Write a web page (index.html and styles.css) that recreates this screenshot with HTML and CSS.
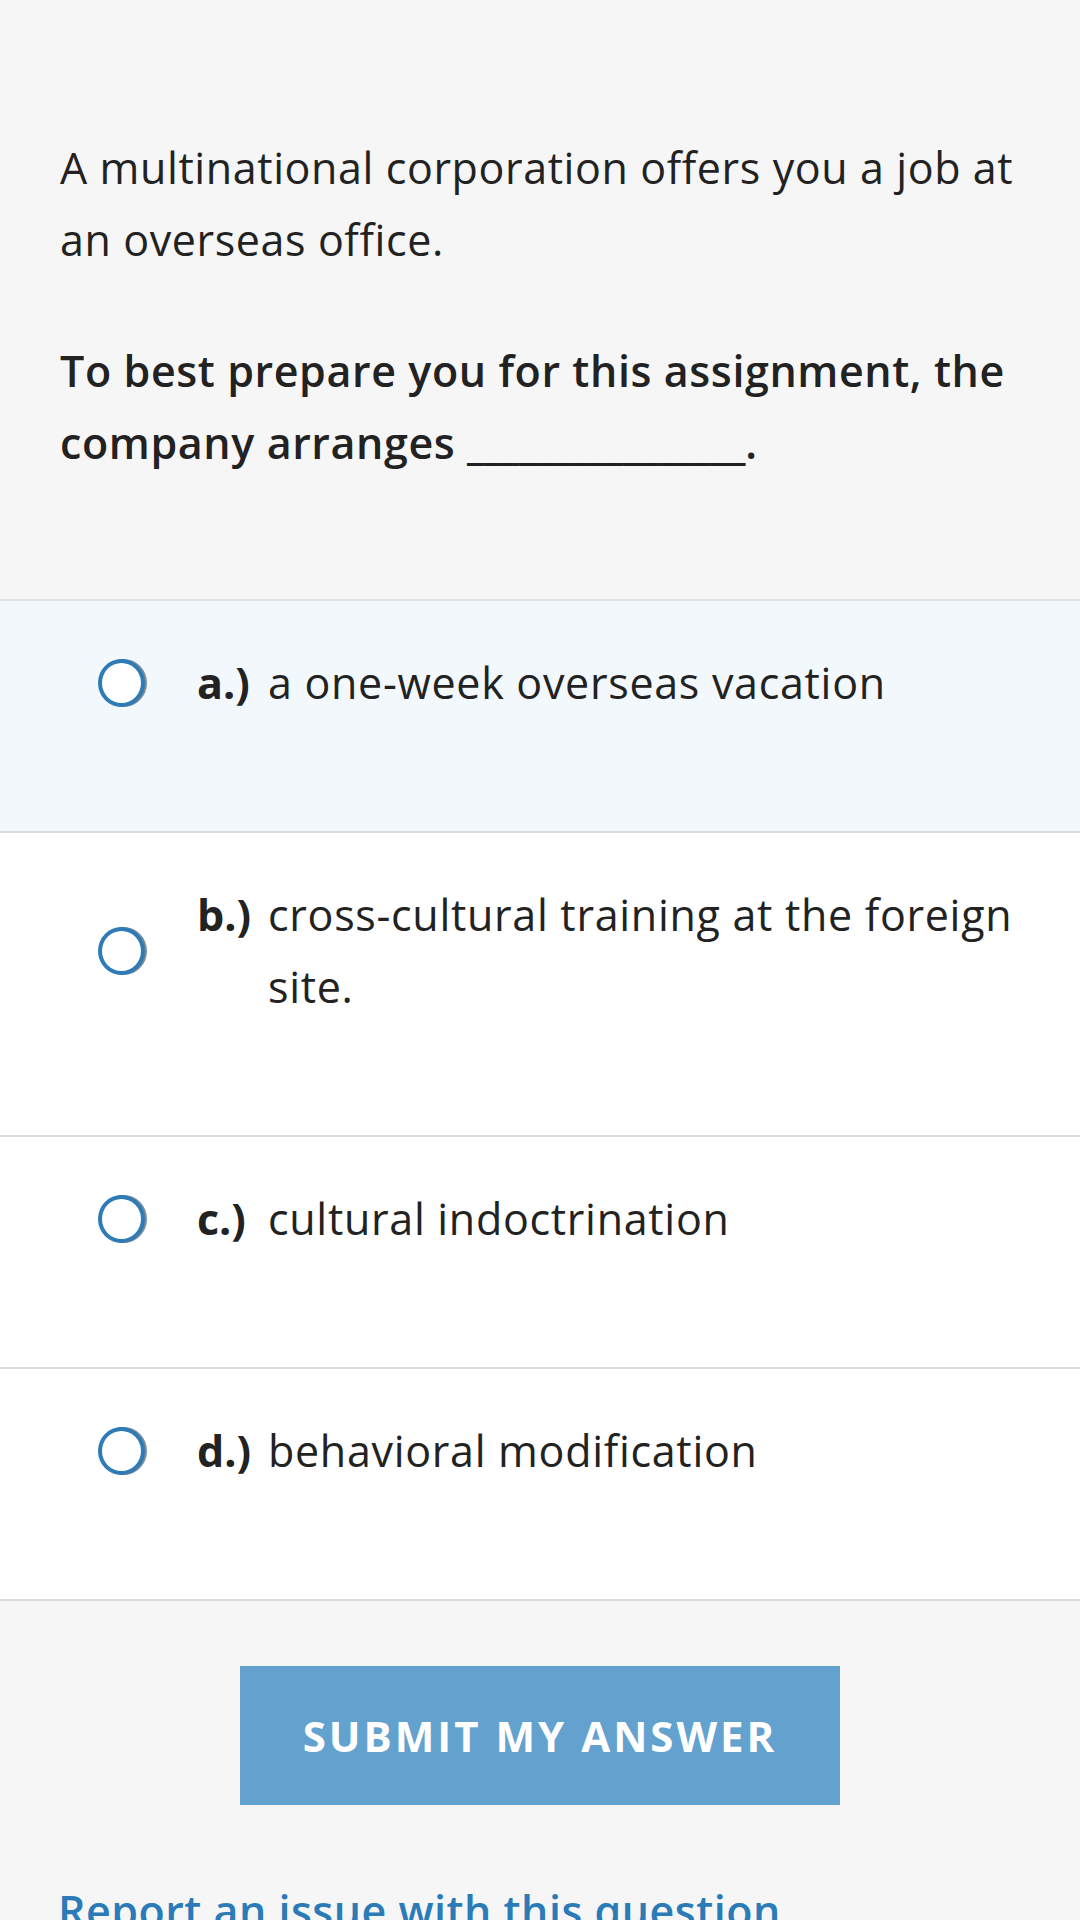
FILE: index.html
```html
<!DOCTYPE html>
<html lang="en">
<head>
<meta charset="utf-8">
<title>Question</title>
<link rel="stylesheet" href="styles.css">
</head>
<body>
<main class="page">
  <section class="question">
    <p class="stem">A multinational corporation offers you a job at an overseas office.</p>
    <p class="prompt">To best prepare you for this assignment, the company arranges <span class="blank">________________</span>.</p>
  </section>

  <ul class="options">
    <li class="option option-active">
      <span class="radio"></span>
      <span class="label">a.)</span>
      <span class="answer">a one-week overseas vacation</span>
    </li>
    <li class="option">
      <span class="radio"></span>
      <span class="label">b.)</span>
      <span class="answer">cross-cultural training at the foreign site.</span>
    </li>
    <li class="option">
      <span class="radio"></span>
      <span class="label">c.)</span>
      <span class="answer">cultural indoctrination</span>
    </li>
    <li class="option">
      <span class="radio"></span>
      <span class="label">d.)</span>
      <span class="answer">behavioral modification</span>
    </li>
  </ul>

  <div class="actions">
    <button class="submit" type="button">Submit my answer</button>
  </div>

  <a class="report" href="#">Report an issue with this question</a>
</main>
</body>
</html>
```

FILE: styles.css
```css
html, body {
  margin: 0;
  padding: 0;
}

body {
  background: #f6f6f6;
  font-family: "Open Sans", Lato, "Liberation Sans", sans-serif;
  color: #222222;
  width: 1080px;
  height: 1920px;
  overflow: hidden;
}

.page {
  display: flex;
  flex-direction: column;
}

.question {
  padding: 132px 50px 120px 60px;
  font-size: 43px;
  line-height: 72px;
  letter-spacing: 0.6px;
}

.question p {
  margin: 0;
}

.stem {
  font-weight: 400;
  margin-bottom: 59px !important;
}

.prompt {
  font-weight: 600;
}

.blank {
  letter-spacing: -0.3px;
  font-weight: 700;
}

.options {
  list-style: none;
  margin: 0;
  padding: 0;
  border-top: 2px solid #dde2e6;
}

.option {
  display: flex;
  align-items: flex-start;
  background: #ffffff;
  border-bottom: 2px solid #dcdcdc;
  padding: 46px 50px 112px 98px;
  font-size: 43px;
  line-height: 72px;
  letter-spacing: 0.7px;
}

.option-active {
  background: #f3f8fd;
  border-bottom-color: #d6dde3;
}

.radio {
  flex: none;
  align-self: center;
  width: 39px;
  height: 40px;
  border: 4px solid #2e7bb5;
  border-radius: 50%;
  background: #ffffff;
  box-shadow: 2px 0 0 0 #7d8c98;
  margin-right: 52px;
}

.label {
  flex: none;
  width: 71px;
  font-weight: 700;
  letter-spacing: 0;
}

.answer {
  flex: 1;
  font-weight: 400;
}

.actions {
  display: flex;
  justify-content: center;
  padding-top: 65px;
}

.submit {
  width: 600px;
  height: 139px;
  border: none;
  border-radius: 0;
  background: #63a1ce;
  color: #ffffff;
  font-family: "Open Sans", Lato, "Liberation Sans", sans-serif;
  font-weight: 700;
  font-size: 42px;
  letter-spacing: 3px;
  text-transform: uppercase;
}

.report {
  display: block;
  margin: 70px 0 0 58px;
  color: #2a7bb8;
  font-size: 43px;
  line-height: 72px;
  font-weight: 600;
  letter-spacing: 0.5px;
  text-decoration: none;
}
```
